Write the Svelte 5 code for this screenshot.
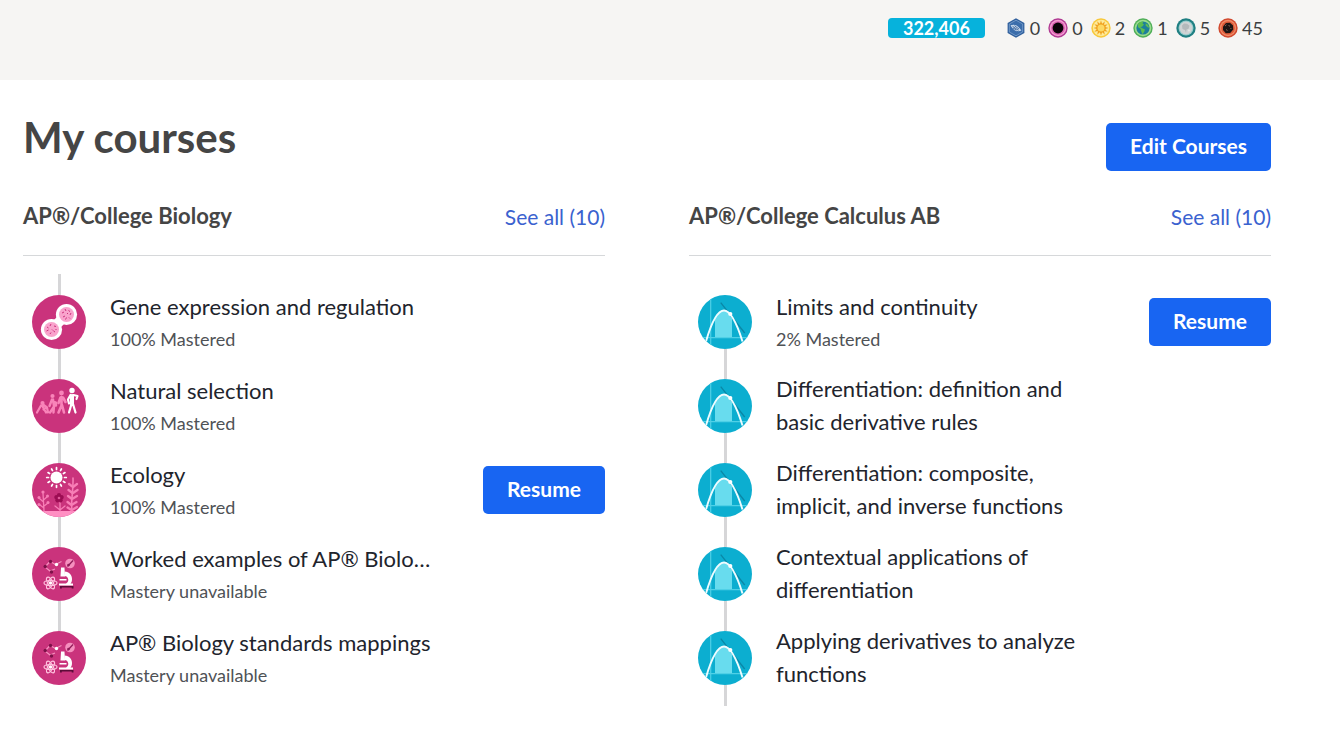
<script>
  const points = '322,406'

  const badges = [
    { icon: 'challenge', label: 'Challenge patches', count: 0 },
    { icon: 'blackhole', label: 'Black hole badges', count: 0 },
    { icon: 'sun', label: 'Sun badges', count: 2 },
    { icon: 'earth', label: 'Earth badges', count: 1 },
    { icon: 'moon', label: 'Moon badges', count: 5 },
    { icon: 'meteorite', label: 'Meteorite badges', count: 45 },
  ]

  const courses = [
    {
      title: 'AP®/College Biology',
      total: 10,
      trail: 'before',
      units: [
        { icon: 'cells', title: 'Gene expression and regulation', mastery: '100% Mastered' },
        { icon: 'evolution', title: 'Natural selection', mastery: '100% Mastered' },
        { icon: 'ecology', title: 'Ecology', mastery: '100% Mastered', resume: true },
        { icon: 'lab', title: 'Worked examples of AP® Biolo…', mastery: 'Mastery unavailable' },
        { icon: 'lab', title: 'AP® Biology standards mappings', mastery: 'Mastery unavailable' },
      ],
    },
    {
      title: 'AP®/College Calculus AB',
      total: 10,
      trail: 'after',
      units: [
        { icon: 'calculus', title: 'Limits and continuity', mastery: '2% Mastered', resume: true },
        { icon: 'calculus', title: 'Differentiation: definition and basic derivative rules' },
        { icon: 'calculus', title: 'Differentiation: composite, implicit, and inverse functions' },
        { icon: 'calculus', title: 'Contextual applications of differentiation' },
        { icon: 'calculus', title: 'Applying derivatives to analyze functions' },
      ],
    },
  ]

  const rays = Array.from({ length: 12 }, (_, i) => i * 30)
  const petals = [0, 72, 144, 216, 288]
</script>

<header>
  <span class="points">{points}</span>
  <ul class="badges">
    {#each badges as badge}
      <li>
        <svg viewBox="0 0 20 20" role="img" aria-label={badge.label}>
          {#if badge.icon === 'challenge'}
            <path d="M10 0.3 18.4 5v10L10 19.7 1.6 15V5z" fill="#2f5f9c" />
            <path d="M10 2.2 16.7 6v8L10 17.8 3.3 14V6z" fill="#3b6dab" stroke="#7fa3cf" stroke-width="0.8" />
            <path d="M4.6 7.2c3-1.200 6-.4 7.600 1.600 1.200 1.400 2.200 2.200 3.200 3.800-2.600 1.200-6 .6-7.600-1.200-.8-.8-2.400-2-3.200-4.200z" fill="#c9d9ec" />
            <path d="M6.500 8.300l6 4M8.500 7.700l4.500 3.400M7 10l3.500 2" stroke="#2a5590" stroke-width="0.8" />
          {:else if badge.icon === 'blackhole'}
            <circle cx="10" cy="10" r="9.700" fill="#b03a92" />
            <circle cx="10" cy="10" r="8.300" fill="#f39bd0" />
            <circle cx="10" cy="10" r="6.800" fill="#d95fae" />
            <circle cx="10" cy="10" r="5.400" fill="#0b0208" />
          {:else if badge.icon === 'sun'}
            <circle cx="10" cy="10" r="9.700" fill="#f8c83a" />
            <circle cx="10" cy="10" r="8.200" fill="#fdeb9c" />
            {#each rays as angle}
              <path d="M8.900 6 10 2.300 11.100 6z" fill="#f0a11e" transform="rotate({angle} 10 10)" />
            {/each}
            <circle cx="10" cy="10" r="4.600" fill="#f0a11e" />
            <circle cx="10" cy="10" r="3.500" fill="#fcd964" />
          {:else if badge.icon === 'earth'}
            <circle cx="10" cy="10" r="9.700" fill="#4fae58" />
            <circle cx="10" cy="10" r="8.300" fill="#9bdc8c" />
            <circle cx="10" cy="10" r="6.600" fill="#1d7f9b" />
            <path d="M4.500 6.500C6 4 8.500 3.300 10.500 3.600L9.500 5.500l1.500 1-2 2.300-1.800.2 2 1.200 2.800 1.200-.8 2.400-1.700 2.400-1.200-2.800-.6-2.400-2.600-1.700z" fill="#5cbd4e" />
            <path d="M12.600 5.200l2.400 1.500 1.300 3-1.800-.4-1.800-1.700z" fill="#5cbd4e" />
          {:else if badge.icon === 'moon'}
            <circle cx="10" cy="10" r="9.700" fill="#1f7f82" />
            <circle cx="10" cy="10" r="7.500" fill="#8ecaca" />
            <circle cx="10" cy="10" r="6.500" fill="#cfd3d4" />
            <path d="M6 7.500l2-2 3 .3 2.500 2-1 3-2 .7-.5 3.500-1-3-2.500-1z" fill="#b3b9bb" />
            <circle cx="13" cy="12.500" r="1" fill="#e4e7e7" />
          {:else}
            <circle cx="10" cy="10" r="9.700" fill="#d1492e" />
            <circle cx="10" cy="10" r="8.200" fill="#f08a66" />
            <circle cx="10" cy="10" r="6.800" fill="#dc5a38" />
            <path d="M5 8.500 8 5l4-.2 3 2.700.2 4-3 3.500-4.400.2L5 12z" fill="#1d1413" />
            <path d="M7 8l1.500-1.300M10.500 7.500l1.500.7M8 11.500l1.500 1M12.500 11l.8-1" stroke="#8b6a5e" stroke-width="0.9" />
          {/if}
        </svg>
        <span>{badge.count}</span>
      </li>
    {/each}
  </ul>
</header>

<main>
  <div class="heading">
    <h1>My courses</h1>
    <button>Edit Courses</button>
  </div>

  <div class="courses">
    {#each courses as course}
      <section>
        <div class="course-head">
          <h2>{course.title}</h2>
          <a href="#all">See all ({course.total})</a>
        </div>
        <ul class="units {course.trail}">
          {#each course.units as unit}
            <li>
              <div class="rail">
                <span class="line"></span>
                <svg viewBox="0 0 54 54" aria-hidden="true">
                  {#if unit.icon === 'calculus'}
                    <rect width="54" height="54" fill="#0caed0" />
                    <path d="M17 43V23c4-6 7-8 9-8s5 2 8 6v22z" fill="#68dcee" />
                    <path d="M12.700 0v54M0 42.700h54" stroke="#4fd0e6" stroke-width="1.200" />
                    <path d="M22.700 7.700 46.700 38" stroke="#0b87a6" stroke-width="1.300" />
                    <path d="M8 46.500C13 29 19 15.500 26 15.500S39 29 44.500 46.500" fill="none" stroke="#eefcff" stroke-width="1.900" />
                    <circle cx="32.300" cy="19" r="2.100" fill="#fff" />
                  {:else}
                    <rect width="54" height="54" fill="#ca337c" />
                    {#if unit.icon === 'cells'}
                      <path d="M19.500 34.500 34.500 19.500" stroke="#fff" stroke-width="10" />
                      <circle cx="34.500" cy="19.500" r="10.600" fill="#fff" />
                      <circle cx="19.500" cy="34.500" r="10.600" fill="#fff" />
                      <circle cx="34.500" cy="19.500" r="7.500" fill="#f9a3cc" />
                      <circle cx="19.500" cy="34.500" r="7.500" fill="#f9a3cc" />
                      <path
                        d="M30 18l2-1M33 14l1 2M36.500 15.500l1.500 1M39 18l-1 2M31 22l2-1M33.500 24.500l1-2M37 22.500l1 1M35 19l1-1M15 32l1.500 1M19 29l-1 2M22 31l2 .5M14.500 36l2-1M18 39l1-1.500M23 37l-1.500-1M20 34.500l1 1M23.500 34l1 1"
                        stroke="#ca337c" stroke-width="1" fill="none"
                      />
                    {:else if unit.icon === 'evolution'}
                      <g fill="none" stroke="#f884b9" stroke-width="2.200" stroke-linecap="round" stroke-linejoin="round">
                        <circle cx="10.500" cy="24" r="1" fill="#f884b9" />
                        <path d="M9 26.500 5 33.500M10 26.500l4 7M11 25.500l4 3 1 5M14.500 28.500l-3 2" />
                        <circle cx="20.500" cy="17" r="1" fill="#f884b9" />
                        <path d="M20 20.500 17.500 27M21 20.500l1 7-4 6M22 27l-.5 6.500M20 22l4 1.500v3" stroke-width="2.400" />
                        <circle cx="29.500" cy="14" r="1.300" fill="#f884b9" />
                        <path d="M29.500 18v8.500l-3 7M30 26l2 7.500M28.500 18.500 26.500 24M31 18.500l2.500 4.500" stroke-width="2.600" />
                      </g>
                      <g fill="none" stroke="#fff" stroke-width="2.200" stroke-linecap="round" stroke-linejoin="round">
                        <circle cx="40" cy="11.500" r="1.600" fill="#fff" />
                        <path d="M40 17v8" stroke-width="4" />
                        <path d="M39.500 25 37 33.500M41 25l2.500 8.500M38.500 16 36 20.500l1 4M41.500 16l4 1-1 3" />
                      </g>
                    {:else if unit.icon === 'ecology'}
                      <circle cx="24.500" cy="14.500" r="6" fill="#fff" />
                      {#each rays as angle}
                        <path d="M24.500 6.500V4.700" stroke="#fff" stroke-width="1.700" stroke-linecap="round" transform="rotate({angle} 24.500 14.500)" />
                      {/each}
                      <path d="M0 48h54v6H0z" fill="#ff8fc3" />
                      <g fill="none" stroke="#f77eb6" stroke-width="1.300" stroke-linecap="round">
                        <path d="M12 48 11 30M11.500 39l-4-3.500M11.500 37l4-3.500M12 45l-4-3M12 43l4-3M28 48V37M28 47l-5-4M28 47l5-4" />
                        <path d="M40 48C38.500 36 41.500 30 41 15" stroke-width="1.600" />
                        <path d="M41 24l-4-3M41 24l4-3M40.500 30l-4-3M41 30l4.500-3M40 36l-4-3M40 36l5-3M39.500 42l-4-3M39.500 42l5-3M39.500 47l-4-2.500M40 47l5-3" stroke-width="2.300" />
                      </g>
                      <g fill="#f77eb6">
                        <circle cx="11" cy="29" r="1.600" />
                        <circle cx="7" cy="34.500" r="1.500" />
                        <circle cx="15.500" cy="33" r="1.500" />
                        <circle cx="7" cy="41.500" r="1.500" />
                        <circle cx="16" cy="39.500" r="1.500" />
                      </g>
                      {#each petals as angle}
                        <circle cx="27" cy="32.200" r="2.100" fill="#9c0d53" transform="rotate({angle} 27 35)" />
                      {/each}
                      <circle cx="27" cy="35" r="1.300" fill="#e2589a" />
                    {:else}
                      <path d="M13 20l5-5.500M18 14.500l5.500 3M23.500 17.500l6-3M13 20l5 4 5-2" fill="none" stroke="#f58fbe" stroke-width="1.200" />
                      <g fill="#7d1149">
                        <circle cx="13.200" cy="19.500" r="1.700" />
                        <circle cx="18.500" cy="14.500" r="1.700" />
                        <circle cx="19.500" cy="25" r="1.700" />
                      </g>
                      <circle cx="24.500" cy="17.500" r="1.700" fill="#fff" />
                      <circle cx="38" cy="16.500" r="4.800" fill="#f58fbe" />
                      <path d="M35.500 19.500 41 13.500" stroke="#8f1a57" stroke-width="1.300" />
                      <circle cx="36.500" cy="18" r="1.300" fill="#8f1a57" />
                      <g fill="none" stroke="#ffc1de" stroke-width="1.200">
                        <ellipse cx="18.500" cy="36" rx="6.500" ry="2.500" />
                        <ellipse cx="18.500" cy="36" rx="6.500" ry="2.500" transform="rotate(60 18.500 36)" />
                        <ellipse cx="18.500" cy="36" rx="6.500" ry="2.500" transform="rotate(120 18.500 36)" />
                      </g>
                      <circle cx="18.500" cy="36" r="1.700" fill="#fff" />
                      <path d="M29 20.500h3.500l.5 9h-4.500z" fill="#fff" />
                      <path d="M32.500 24.500c5 .5 7.500 3.500 7.500 7.500 0 2-.5 3.500-1.500 4.500h2.500v2h-14v-2h7c2-1 3-3.200 1.800-5.500-.6-1.200-1.600-1.800-3.300-2z" fill="#fff" />
                      <path d="M27.500 32h7v1.500h-7z" fill="#fff" />
                      <path d="M28 39h13.500v2.500h-1.800v-1h-9.900v1H28z" fill="#5c0c38" />
                    {/if}
                  {/if}
                </svg>
                <span class="line"></span>
              </div>
              <div class="text">
                <span class="title" class:single={unit.mastery}>{unit.title}</span>
                {#if unit.mastery}
                  <span class="mastery">{unit.mastery}</span>
                {/if}
              </div>
              {#if unit.resume}
                <button>Resume</button>
              {/if}
            </li>
          {/each}
        </ul>
      </section>
    {/each}
  </div>
</main>

<style>
  :global(body) {
    margin: 0;
    background: #fff;
    color: #21242c;
    font-family: Lato, 'Noto Sans', sans-serif;
  }
  ul {
    list-style: none;
    margin: 0;
    padding: 0;
  }
  h1,
  h2 {
    margin: 0;
    color: #454545;
    font-weight: 700;
  }
  header {
    display: flex;
    justify-content: flex-end;
    align-items: flex-start;
    gap: 21px;
    height: 62px;
    padding: 18px 77px 0 23px;
    background: #f6f5f3;
    color: #3b3e40;
    font-size: 18px;
    line-height: 20px;
  }
  .points {
    padding: 0 15px;
    border-radius: 4px;
    background: #06b2dc;
    color: #fff;
    font-weight: 700;
  }
  .badges {
    display: flex;
    gap: 8px;
  }
  .badges li {
    display: flex;
    gap: 4px;
  }
  .badges svg {
    width: 20px;
    height: 20px;
  }
  main {
    padding: 32px 69px 40px 23px;
  }
  .heading {
    display: flex;
    justify-content: space-between;
    align-items: flex-end;
    height: 59px;
  }
  h1 {
    align-self: flex-start;
    font-size: 42px;
    line-height: 50px;
  }
  button {
    height: 48px;
    padding: 0 24px 4px;
    border: 0;
    border-radius: 5px;
    background: #1865f2;
    color: #fff;
    font-family: inherit;
    font-size: 21px;
    font-weight: 700;
    cursor: pointer;
  }
  .courses {
    display: grid;
    grid-template-columns: 1fr 1fr;
    gap: 84px;
    margin-top: 29px;
  }
  .course-head {
    display: flex;
    justify-content: space-between;
    align-items: flex-start;
    height: 55px;
    border-bottom: 1px solid #d6d8da;
  }
  h2 {
    font-size: 22px;
    line-height: 32px;
  }
  a {
    color: #3a62cf;
    font-size: 21px;
    line-height: 33px;
    text-decoration: none;
  }
  a:hover {
    text-decoration: underline;
  }
  .units {
    padding: 24px 0 6px 9px;
  }
  .units li {
    display: grid;
    grid-template-columns: 54px 1fr 122px;
    align-items: center;
    height: 84px;
  }
  .rail {
    display: flex;
    flex-direction: column;
    align-items: center;
  }
  .rail svg {
    width: 54px;
    height: 54px;
    border-radius: 50%;
  }
  .line {
    width: 3px;
    height: 15px;
    background: #d6d6d8;
  }
  /* the rail runs past the list at one end only */
  .before li:first-child .line:first-child {
    height: 21px;
    margin-top: -6px;
  }
  .after li:last-child .line:last-child {
    height: 21px;
    margin-bottom: -6px;
  }
  .before li:last-child .line:last-child,
  .after li:first-child .line:first-child {
    visibility: hidden;
  }
  .text {
    display: flex;
    flex-direction: column;
    gap: 4px;
    min-width: 0;
    margin: 0 42px 0 24px;
    padding-bottom: 3px;
  }
  .title {
    font-size: 22px;
    line-height: 33px;
  }
  .single {
    overflow: hidden;
    text-overflow: ellipsis;
    white-space: nowrap;
  }
  .mastery {
    color: #4f5256;
    font-size: 18px;
    line-height: 24px;
  }
</style>
